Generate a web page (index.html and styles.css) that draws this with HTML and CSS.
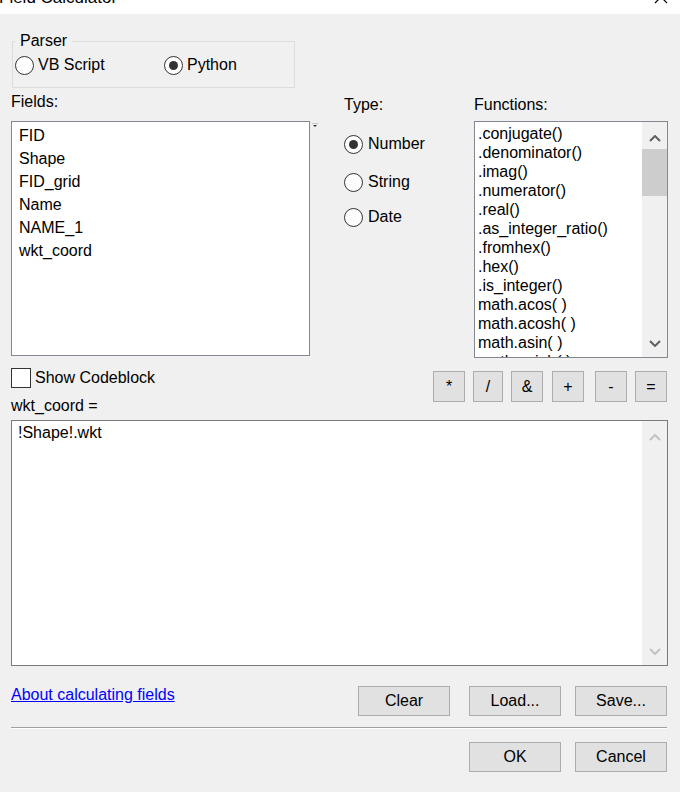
FILE: index.html
```
<!DOCTYPE html>
<html lang="en">
<head>
    <meta charset="UTF-8">
    <title>Field Calculator</title>
    <link rel="stylesheet" href="styles.css">
</head>
<body>
    <div class="titlebar">
        <span class="title">Field Calculator</span>
        <svg class="close" width="14" height="14" viewBox="0 0 14 14">
            <path d="M1 1L13 13M13 1L1 13" stroke="#000" stroke-width="1.2" fill="none" />
        </svg>
    </div>

    <div class="dialog">
        <!-- parser choice -->
        <fieldset class="parser">
            <legend>Parser</legend>
            <label class="opt opt-vb"><span class="radio"></span>VB Script</label>
            <label class="opt"><span class="radio on"></span>Python</label>
        </fieldset>

        <div class="cols">
            <div class="col-fields">
                <div class="lbl lbl-fields">Fields:</div>
                <div class="fields-row">
                    <div class="list fields">
                        <div>FID</div>
                        <div>Shape</div>
                        <div>FID_grid</div>
                        <div>Name</div>
                        <div>NAME_1</div>
                        <div>wkt_coord</div>
                    </div>
                    <svg class="tick" width="6" height="5" viewBox="0 0 6 5">
                        <path d="M0 0.5H6" stroke="#c8c8c8" stroke-width="1" />
                        <path d="M1 2H5L3 4Z" fill="#333" />
                    </svg>
                </div>
            </div>

            <div class="col-type">
                <div class="lbl lbl-top">Type:</div>
                <div class="types">
                    <label class="opt opt-num"><span class="radio on"></span>Number</label>
                    <label class="opt opt-str"><span class="radio"></span>String</label>
                    <label class="opt opt-date"><span class="radio"></span>Date</label>
                </div>
            </div>

            <div class="col-func">
                <div class="lbl lbl-top lbl-func">Functions:</div>
                <div class="list func-box">
                    <div class="func-items">
                        <div>.conjugate()</div>
                        <div>.denominator()</div>
                        <div>.imag()</div>
                        <div>.numerator()</div>
                        <div>.real()</div>
                        <div>.as_integer_ratio()</div>
                        <div>.fromhex()</div>
                        <div>.hex()</div>
                        <div>.is_integer()</div>
                        <div>math.acos( )</div>
                        <div>math.acosh( )</div>
                        <div>math.asin( )</div>
                        <div>math.asinh( )</div>
                    </div>
                    <div class="scroll">
                        <div class="arrow-up">
                            <svg width="12" height="7" viewBox="0 0 12 7"><polyline points="1,6 6,1 11,6" fill="none" stroke="#606060" stroke-width="2" /></svg>
                        </div>
                        <div class="thumb"></div>
                        <div class="arrow-down">
                            <svg width="12" height="7" viewBox="0 0 12 7"><polyline points="1,1 6,6 11,1" fill="none" stroke="#606060" stroke-width="2" /></svg>
                        </div>
                    </div>
                </div>
            </div>
        </div>

        <div class="mid">
            <div class="cb-col">
                <label class="cb-row"><span class="checkbox"></span>Show Codeblock</label>
                <div class="lbl expr-lbl">wkt_coord =</div>
            </div>
            <div class="ops">
                <button class="op">*</button>
                <button class="op op-slash">/</button>
                <button class="op op-amp">&amp;</button>
                <button class="op op-plus">+</button>
                <button class="op">-</button>
                <button class="op">=</button>
            </div>
        </div>

        <div class="expr">
            <div class="expr-text">!Shape!.wkt</div>
            <div class="scroll scroll-off">
                <div class="arrow-up">
                    <svg width="12" height="7" viewBox="0 0 12 7"><polyline points="1,6 6,1 11,6" fill="none" stroke="#c2c2c2" stroke-width="2" /></svg>
                </div>
                <div class="arrow-down">
                    <svg width="12" height="7" viewBox="0 0 12 7"><polyline points="1,1 6,6 11,1" fill="none" stroke="#c2c2c2" stroke-width="2" /></svg>
                </div>
            </div>
        </div>

        <div class="actions">
            <a class="help" href="#">About calculating fields</a>
            <button class="btn btn-clear">Clear</button>
            <button class="btn">Load...</button>
            <button class="btn">Save...</button>
        </div>

        <div class="sep"></div>

        <div class="footer">
            <button class="btn">OK</button>
            <button class="btn">Cancel</button>
        </div>
    </div>
</body>
</html>
```

FILE: styles.css
```
body {
    margin: 0;
    width: 680px;
    height: 792px;
    overflow: hidden;
    background-color: #f0f0f0;
    font-family: "Liberation Sans", Arial, sans-serif;
    font-size: 16px;
    color: #000;
}

/* window title, cut off at the top */
.titlebar {
    height: 14px;
    background-color: #fff;
    display: flex;
    justify-content: space-between;
    overflow: hidden;
}
.title {
    display: block;
    margin: -11px 0 0 -1px;
    font-size: 17px;
    line-height: 18px;
}
.close {
    margin: -10px 12px 0 0;
}

.dialog {
    padding: 0 12px 0 11px;
}

.lbl {
    line-height: 18px;
}

/* parser group */
.parser {
    margin: 18px 0 0 1px;
    width: 283px;
    box-sizing: border-box;
    border: 1px solid #dcdcdc;
    padding: 5px 2px 12px;
    display: flex;
}
.parser legend {
    padding: 0 5px;
    line-height: 18px;
}
.opt {
    display: flex;
    align-items: center;
    gap: 4px;
    height: 20px;
}
.opt-vb {
    width: 149px;
}
.radio {
    width: 19px;
    height: 19px;
    box-sizing: border-box;
    border: 1px solid #333;
    border-radius: 50%;
    background-color: #fff;
    display: flex;
    align-items: center;
    justify-content: center;
}
.radio.on::after {
    content: "";
    width: 9px;
    height: 9px;
    border-radius: 50%;
    background-color: #333;
}

/* fields / type / functions */
.cols {
    display: flex;
}
.col-fields {
    width: 333px;
}
.col-type {
    width: 130px;
}
.col-func {
    flex: 1;
}
.lbl-fields {
    margin: 5px 0 10px;
}
.lbl-top {
    margin-top: 8px;
}
.lbl-func {
    margin-bottom: 7px;
}
.fields-row {
    display: flex;
    align-items: flex-start;
}
.tick {
    margin: 2px 0 0 2px;
}
.list {
    background-color: #fff;
    border: 1px solid #828790;
    box-sizing: border-box;
    overflow: hidden;
}
.fields {
    width: 299px;
    height: 235px;
    padding: 2px 7px;
    line-height: 23px;
}
.types {
    display: flex;
    flex-direction: column;
}
.types .opt {
    gap: 5px;
}
.opt-num {
    margin-top: 20px;
}
.opt-str {
    margin-top: 18px;
}
.opt-date {
    margin-top: 15px;
}
.func-box {
    height: 237px;
    display: flex;
}
.func-items {
    flex: 1;
    padding: 2px 3px;
    line-height: 19px;
    overflow: hidden;
    white-space: nowrap;
}

/* scrollbars */
.scroll {
    width: 25px;
    background-color: #f0f0f0;
    display: flex;
    flex-direction: column;
}
.arrow-up {
    height: 27px;
}
.arrow-up svg {
    display: block;
    margin: 13px auto 0;
}
.thumb {
    height: 47px;
    background-color: #cdcdcd;
}
.arrow-down {
    margin-top: auto;
    height: 27px;
}
.arrow-down svg {
    display: block;
    margin: 10px auto 0;
}

/* codeblock + operators */
.mid {
    display: flex;
    justify-content: space-between;
    align-items: flex-start;
}
.cb-col {
    margin-top: 10px;
}
.cb-row {
    display: flex;
    align-items: center;
    gap: 4px;
    height: 20px;
}
.checkbox {
    width: 20px;
    height: 20px;
    box-sizing: border-box;
    border: 1px solid #333;
    background-color: #fff;
}
.expr-lbl {
    margin-top: 9px;
}
.ops {
    display: flex;
    gap: 8px;
    margin: 13px 1px 0 0;
}
.op {
    width: 32px;
    height: 31px;
    padding: 0;
    box-sizing: border-box;
    border: 1px solid #adadad;
    background-color: #e1e1e1;
    font-family: inherit;
    font-size: 16px;
    color: #000;
}
.op-slash {
    width: 30px;
}
.op-amp {
    margin-right: 1px;
}
.op-plus {
    margin-right: 3px;
}

/* expression */
.expr {
    margin-top: 5px;
    height: 246px;
    display: flex;
    background-color: #fff;
    border: 1px solid #7a7a7a;
    box-sizing: border-box;
}
.expr-text {
    flex: 1;
    padding: 3px 6px;
    line-height: 18px;
}

/* buttons */
.actions {
    display: flex;
    align-items: flex-start;
    margin: 20px 1px 0 0;
    gap: 14px;
}
.help {
    margin-right: auto;
    line-height: 18px;
    color: #0000ff;
}
.btn-clear {
    margin-right: 5px;
}
.btn {
    width: 92px;
    height: 30px;
    padding: 0;
    box-sizing: border-box;
    border: 1px solid #adadad;
    background-color: #e1e1e1;
    font-family: inherit;
    font-size: 16px;
    color: #000;
}
.sep {
    margin: 11px 1px 0 0;
    border-top: 1px solid #a0a0a0;
    border-bottom: 1px solid #fff;
}
.footer {
    display: flex;
    justify-content: flex-end;
    gap: 14px;
    margin: 13px 1px 0 0;
}
```
